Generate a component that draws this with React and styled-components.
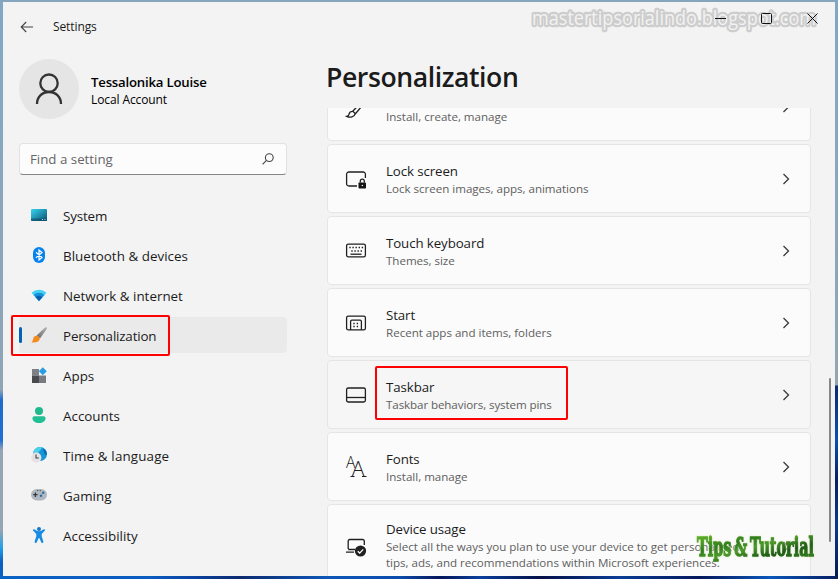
import styled, { createGlobalStyle } from "styled-components";

const GlobalStyle = createGlobalStyle`
  * {
    box-sizing: border-box;
  }
  body {
    margin: 0;
    overflow: hidden;
    font-family: "Open Sans", "Noto Sans", sans-serif;
    color: #1b1b1b;
  }
`;

const Desktop = styled.div`
  width: 838px;
  height: 579px;
  padding: 2px 3px 3px;
  background:
    linear-gradient(90deg, #0a62c4 0, #0a5cc0 150px, #0b3f9a 200px, #0c2a70 240px, #0d58b8 330px, #0b4cab 400px, #06155a 440px, #0a3f9c 480px, #050f48 540px, #0a3c96 620px, #06185c 700px, #0a58ba 770px, #061c62 838px) 0 576px / 838px 3px no-repeat,
    linear-gradient(180deg, #82a7c4 0, #8ea6b6 300px, #93a5b1 385px, #0a2a70 386px, #0c50b0 440px, #05205e 480px, #0b3a8c 525px, #05184e 579px) 835px 0 / 3px 579px no-repeat,
    linear-gradient(180deg, #82a7c4 0, #8fa5b6 390px, #1d6ccc 400px, #1f6fd4 440px, #95a5b4 450px, #95a5b4 530px, #22a0e8 548px, #0b5fc2 562px, #0a62c4 579px) 0 0 / 3px 579px no-repeat,
    #85a5bd;
`;

const Window = styled.div`
  position: relative;
  display: flex;
  width: 832px;
  height: 574px;
  background: #f3f3f3;
  overflow: hidden;
`;

const Sidebar = styled.aside`
  width: 284px;
  padding-left: 16px;
  flex-shrink: 0;
`;

const TitleBar = styled.div`
  display: flex;
  align-items: center;
  gap: 19px;
  height: 49px;
  font-size: 12px;
  letter-spacing: -0.1px;
  padding-left: 1px;
`;

const Profile = styled.div`
  display: flex;
  align-items: center;
  gap: 12px;
  margin-top: 8px;
`;

const Avatar = styled.div`
  display: flex;
  align-items: center;
  justify-content: center;
  width: 60px;
  height: 60px;
  border-radius: 50%;
  background: #e5e5e5;
`;

const UserName = styled.div`
  font-size: 13.2px;
  font-weight: 600;
  line-height: 18px;
  color: #000;
  letter-spacing: -0.2px;
  padding-top: 2px;
`;

const UserType = styled.div`
  font-size: 12px;
  line-height: 17px;
  color: #000;
  letter-spacing: -0.1px;
`;

const SearchBox = styled.div`
  display: flex;
  align-items: center;
  justify-content: space-between;
  width: 268px;
  height: 32px;
  margin-top: 24px;
  padding: 0 12px 0 10px;
  background: #fcfcfc;
  border: 1px solid #e2e2e2;
  border-bottom-color: #858585;
  border-radius: 4px;
  color: #666;
  font-size: 13.3px;
`;

const Nav = styled.nav`
  display: flex;
  flex-direction: column;
  gap: 4px;
  margin-top: 22px;
`;

const NavItem = styled.div`
  display: flex;
  align-items: center;
  width: 268px;
  height: 36px;
  padding-top: 2px;
  border-radius: 4px;
  background: ${(props) => (props.$active ? "#eaeaea" : "transparent")};
  font-size: 13.4px;
  letter-spacing: ${(props) => props.$spacing || 0}px;

  &::before {
    content: "";
    width: 3px;
    height: 16px;
    margin-top: -2px;
    border-radius: 2px;
    background: ${(props) => (props.$active ? "#0063b8" : "transparent")};
  }

  svg {
    margin: -2px 16px 0 9px;
  }
`;

const Main = styled.main`
  flex: 1;
  display: flex;
  flex-direction: column;
  padding-left: 40px;
`;

const Controls = styled.div`
  display: flex;
  justify-content: flex-end;
  align-items: center;
  gap: 35px;
  height: 32px;
  padding-right: 17px;
  z-index: 1;
`;

const Heading = styled.h1`
  margin: 22px 0 0 -1px;
  height: 52px;
  font-size: 26.6px;
  line-height: 42px;
  font-weight: 600;
  letter-spacing: -0.42px;
`;

const CardList = styled.div`
  display: flex;
  flex-direction: column;
  gap: 3px;
  height: 468px;
  overflow: hidden;
`;

const Card = styled.div`
  display: flex;
  align-items: center;
  flex-shrink: 0;
  width: 484px;
  height: ${(props) => (props.$tall ? 85 : 69)}px;
  padding: 0 20px 0 18px;
  border: 1px solid #e5e5e5;
  border-radius: 4px;
  background: ${(props) => (props.$hover ? "#f6f6f6" : "#fbfbfb")};

  &:first-child {
    margin-top: -36px;
  }
`;

const CardText = styled.div`
  flex: 1;
  padding: ${(props) => (props.$tall ? "0 0 2px" : "1px 0 0")};
  margin-left: 20px;
  white-space: pre;
`;

const CardTitle = styled.div`
  padding-bottom: 1px;
  font-size: 13.3px;
  line-height: 18px;
  letter-spacing: -0.1px;
`;

const CardDesc = styled.div`
  font-size: 11.6px;
  line-height: 16px;
  color: #606060;
  letter-spacing: ${(props) => props.$spacing || -0.02}px;
`;

const ScrollThumb = styled.div`
  position: absolute;
  top: 376px;
  right: 4px;
  width: 2px;
  height: 164px;
  border-radius: 1px;
  background: #868686;
`;

const Highlight = styled.div`
  position: absolute;
  top: ${(props) => props.$top}px;
  left: ${(props) => props.$left}px;
  width: ${(props) => props.$width}px;
  height: ${(props) => props.$height}px;
  border: 2px solid #ff0000;
  border-radius: 2px;
`;

const Watermark = styled.svg`
  position: absolute;
  top: 0;
  left: 522px;
`;

const Brand = styled.svg`
  position: absolute;
  top: 526px;
  left: 690px;
  filter: drop-shadow(0 0 1px #dbe5bd);
`;

const Icon = ({ size = 16, children }) => (
  <svg width={size} height={size} viewBox={`0 0 ${size} ${size}`} fill="none">
    {children}
  </svg>
);

const LineIcon = ({ children }) => (
  <svg width="20" height="20" viewBox="0 0 20 20" fill="none" stroke="#202020" strokeWidth="1.3" overflow="visible">
    {children}
  </svg>
);

const navItems = [
  {
    label: "System",
    spacing: -0.15,
    icon: (
      <Icon>
        <defs>
          <linearGradient id="sys" x1="0" y1="0" x2="1" y2="1">
            <stop stopColor="#36d5f0" />
            <stop offset="1" stopColor="#0b4f70" />
          </linearGradient>
        </defs>
        <rect y="2" width="16" height="12" rx="1" fill="url(#sys)" />
        <path d="M0 11.5h16V13a1 1 0 0 1-1 1H1a1 1 0 0 1-1-1z" fill="#0b4660" opacity=".6" />
        <path d="M11 12.5h1M13.5 12.5h1" stroke="#b5e8ff" />
      </Icon>
    ),
  },
  {
    label: "Bluetooth & devices",
    spacing: 0.03,
    icon: (
      <Icon>
        <rect x="2" width="12" height="16" rx="6" fill="#0883ee" />
        <path d="M5 5.3l6 5.2L8 13V3l3 2.5-6 5.2" stroke="#fff" strokeWidth="1.2" />
      </Icon>
    ),
  },
  {
    label: "Network & internet",
    icon: (
      <Icon>
        <path d="M.5 5.8a10.8 10.8 0 0 1 15 0L8 14z" fill="#45d0f3" />
        <path d="M2.5 8a7.8 7.8 0 0 1 11 0L8 14z" fill="#1591dc" />
        <path d="M4.6 10.2a4.8 4.8 0 0 1 6.8 0L8 14z" fill="#0b5eae" />
      </Icon>
    ),
  },
  {
    label: "Personalization",
    active: true,
    spacing: -0.18,
    icon: (
      <Icon>
        <defs>
          <linearGradient id="brush" x1="1" y1="0" x2="0" y2="1">
            <stop stopColor="#b5b5b5" />
            <stop offset="1" stopColor="#68696b" />
          </linearGradient>
        </defs>
        <path d="M15.6.4c.7.7.2 1.7-.3 2.4L9 11.5 5.6 8.4 13 1.4c.8-.8 1.9-1.6 2.6-1z" fill="url(#brush)" />
        <path d="M5.6 8.8c1.9.2 3.5 1.7 3 3.7-.7 2.5-4 3.6-8.2 2.8 1.8-1 1.3-2.4 2-4.2.6-1.5 1.7-2.4 3.2-2.3z" fill="#f58b1f" />
      </Icon>
    ),
  },
  {
    label: "Apps",
    icon: (
      <Icon>
        <path d="M1 2h7v6.5H1z" fill="#7d8185" />
        <path d="M1 8.5h7V16H1z" fill="#484b4e" />
        <path d="M8 8.5h7V16H8z" fill="#787c80" />
        <path d="M11.8.2l4 4-4 4-4-4z" fill="#279ee4" />
      </Icon>
    ),
  },
  {
    label: "Accounts",
    icon: (
      <Icon>
        <circle cx="8" cy="4" r="4" fill="#20b98e" />
        <path d="M3.5 9.2h9c1.2 0 2 .8 2 2 0 3-2.8 4.8-6.5 4.8s-6.5-1.8-6.5-4.8c0-1.2.8-2 2-2z" fill="#20bf94" />
      </Icon>
    ),
  },
  {
    label: "Time & language",
    spacing: 0.14,
    icon: (
      <Icon>
        <circle cx="9" cy="7" r="7" fill="#1596d4" />
        <path d="M3 3.5C5 .6 8-.2 10 .1c1 1 .5 2.5-.8 3.2C8 4 8 5.5 6.5 6L2.2 7z" fill="#4fd0ea" />
        <path d="M12 1.5c2.5 1 4 3.5 3.9 6-.8 1-2 .2-2.5-1z" fill="#0b65b8" />
        <circle cx="5.3" cy="10.6" r="5.1" fill="#e6e2e3" />
        <path d="M5 7.5V11h2.8" stroke="#404040" strokeWidth="1.1" />
      </Icon>
    ),
  },
  {
    label: "Gaming",
    icon: (
      <Icon>
        <rect y="2" width="16" height="11.5" rx="5.7" fill="#b0b7be" />
        <path d="M2.2 7.7h4.4M4.4 5.5v4.4" stroke="#353b40" strokeWidth="1.3" />
        <circle cx="12.2" cy="5.7" r="1.2" fill="#2670a8" />
        <circle cx="10" cy="8.8" r="1.2" fill="#2670a8" />
        <path d="M6 3.6h1.2M8.7 3.6h1.2" stroke="#444b50" />
      </Icon>
    ),
  },
  {
    label: "Accessibility",
    icon: (
      <Icon>
        <circle cx="8" cy="2.1" r="2" fill="#1277cc" />
        <path d="M2.2 2.5c.5-.6 1.2-.4 1.8.1C5.2 3.7 6.5 4.3 8 4.3s2.8-.6 4-1.7c.6-.5 1.3-.7 1.8-.1.5.7.1 1.2-.5 1.8L10.7 7v2.3l1.6 5c.2.8 0 1.4-.7 1.6-.6.2-1.2-.1-1.5-.9L8.3 11h-.6l-1.8 4c-.3.8-.9 1.1-1.5.9-.7-.2-.9-.8-.7-1.6l1.6-5V7L2.7 4.3c-.6-.6-1-1.1-.5-1.8z" fill="#168be4" />
      </Icon>
    ),
  },
];

const cards = [
  {
    title: "Themes",
    desc: "Install, create, manage",
    spacing: -0.02,
    icon: (
      <LineIcon>
        <path d="M6.5 14.5L16.5 4M9.2 17L18.5 6M7 14.3c-2.5-.2-3.7 1.2-4 3-.2 1.300-1 1.700-2.300 2 3.200 1.500 7.800.8 8.600-2.600z" />
      </LineIcon>
    ),
  },
  {
    title: "Lock screen",
    desc: "Lock screen images, apps, animations",
    spacing: -0.03,
    icon: (
      <LineIcon>
        <path d="M11 17H3a2.300 2.300 0 0 1-2.400-2.300V5.300A2.300 2.300 0 0 1 3 3h14a2.300 2.300 0 0 1 2.400 2.300V9" />
        <rect x="12.5" y="13.5" width="7.5" height="6" rx=".8" fill="#151515" stroke="none" />
        <path d="M14.300 13.500v-1.300a2 2 0 0 1 4 0v1.300" />
        <circle cx="16.300" cy="16.500" r=".7" fill="#fff" stroke="none" />
      </LineIcon>
    ),
  },
  {
    title: "Touch keyboard",
    desc: "Themes, size",
    spacing: -0.04,
    icon: (
      <LineIcon>
        <rect x=".6" y="3.100" width="18.800" height="12.800" rx="1.700" />
        <path d="M3.300 6.500h14M5.300 10h11" strokeDasharray="1.400 1.700" strokeWidth="1.400" />
        <path d="M4.500 13.200h11" />
      </LineIcon>
    ),
  },
  {
    title: "Start",
    desc: "Recent apps and items, folders",
    icon: (
      <LineIcon>
        <rect x=".6" y="3.100" width="18.800" height="13.800" rx="1.700" />
        <path d="M4.600 17V8.500a1.300 1.300 0 0 1 1.300-1.300h8.200a1.300 1.300 0 0 1 1.300 1.300V17" />
        <path d="M7.300 10.500h6M7.300 13.500h6" strokeDasharray="1.400 2" strokeWidth="1.400" />
      </LineIcon>
    ),
  },
  {
    title: "Taskbar",
    desc: "Taskbar behaviors, system pins",
    spacing: -0.1,
    hover: true,
    icon: (
      <LineIcon>
        <rect x=".6" y="3" width="18.800" height="14" rx="1.800" />
        <path d="M.6 12.500h18.800" />
      </LineIcon>
    ),
  },
  {
    title: "Fonts",
    desc: "Install, manage",
    icon: (
      <svg width="20" height="22" viewBox="0 0 20 22" fill="#202020" fontFamily="Open Sans, sans-serif" fontWeight="300" overflow="visible">
        <text x="0" y="12" fontSize="15.5">A</text>
        <text x="5.5" y="21" fontSize="22">A</text>
        <path d="M4.5 20.5h4M16 20.5h4.5" stroke="#202020" />
      </svg>
    ),
  },
  {
    title: "Device usage",
    desc: "Select all the ways you plan to use your device to get personalized\ntips, ads, and recommendations within Microsoft experiences.",
    spacing: -0.02,
    tall: true,
    icon: (
      <LineIcon>
        <path d="M2.200 12V4a1.500 1.500 0 0 1 1.500-1.500h13A1.500 1.500 0 0 1 18.300 4v4M2.200 12.500H9M0 15.200h8" />
        <circle cx="14.500" cy="14" r="5.600" fill="#202020" stroke="none" />
        <path d="M11.800 14.200l1.900 1.900 3.500-3.700" stroke="#fff" />
      </LineIcon>
    ),
  },
];

const Chevron = () => (
  <svg width="8" height="12" viewBox="0 0 8 12" fill="none" stroke="#3a3a3a" strokeWidth="1.3">
    <path d="M1.5 1l5 5-5 5" />
  </svg>
);

const App = () => {
  return (
    <>
      <GlobalStyle />
      <Desktop>
        <Window>
          <Sidebar>
            <TitleBar>
              <svg width="14" height="12" viewBox="0 0 14 12" fill="none" stroke="#444" strokeWidth="1.1">
                <path d="M13 6H1.5M6.2 1L1.2 6l5 5" />
              </svg>
              Settings
            </TitleBar>
            <Profile>
              <Avatar>
                <svg width="28" height="32" viewBox="0 0 28 32" fill="none" stroke="#333" strokeWidth="2.3">
                  <circle cx="14" cy="10.2" r="8.7" />
                  <path d="M2 31c0-7 5-12 12-12s12 5 12 12" />
                </svg>
              </Avatar>
              <div>
                <UserName>Tessalonika Louise</UserName>
                <UserType>Local Account</UserType>
              </div>
            </Profile>
            <SearchBox>
              Find a setting
              <svg width="12" height="12" viewBox="0 0 12 12" fill="none" stroke="#444" strokeWidth="1.1">
                <circle cx="7.3" cy="4.6" r="3.9" />
                <path d="M4.4 7.4L.6 11.3" />
              </svg>
            </SearchBox>
            <Nav>
              {navItems.map((item) => (
                <NavItem key={item.label} $active={item.active} $spacing={item.spacing}>
                  {item.icon}
                  {item.label}
                </NavItem>
              ))}
            </Nav>
          </Sidebar>
          <Main>
            <Controls>
              <svg width="11" height="11" viewBox="0 0 11 11" stroke="#111">
                <path d="M0 5.5h11" />
              </svg>
              <svg width="11" height="11" viewBox="0 0 11 11" fill="none" stroke="#111">
                <rect x=".5" y=".5" width="10" height="10" rx="1" />
              </svg>
              <svg width="11" height="11" viewBox="0 0 11 11" stroke="#111">
                <path d="M.5.5l10 10M10.5.5l-10 10" />
              </svg>
            </Controls>
            <Heading>Personalization</Heading>
            <CardList>
              {cards.map((card) => (
                <Card key={card.title} $hover={card.hover} $tall={card.tall}>
                  {card.icon}
                  <CardText $tall={card.tall}>
                    <CardTitle>{card.title}</CardTitle>
                    <CardDesc $spacing={card.spacing}>{card.desc}</CardDesc>
                  </CardText>
                  <Chevron />
                </Card>
              ))}
            </CardList>
          </Main>
          <ScrollThumb />
          <Highlight $top={313} $left={8} $width={159} $height={41} />
          <Highlight $top={364} $left={372} $width={193} $height={54} />
          <Watermark width="310" height="34">
            <text x="7" y="22.5" fontSize="20" fontFamily="Open Sans, sans-serif" textLength="284" lengthAdjust="spacingAndGlyphs" fill="#f2f2f2" stroke="#cdcdcd" strokeWidth="4.5" strokeLinejoin="round" paintOrder="stroke">
              mastertipsorialindo.blogspot.com
            </text>
          </Watermark>
          <Brand width="130" height="40">
            <defs>
              <linearGradient id="leaf" x1="0" y1="0" x2="1" y2="1">
                <stop stopColor="#6fc22a" />
                <stop offset=".35" stopColor="#2f7d1d" />
                <stop offset=".5" stopColor="#4c9a2a" />
                <stop offset=".7" stopColor="#1f5c18" />
                <stop offset="1" stopColor="#3f8a26" />
              </linearGradient>
            </defs>
            <text x="4" y="27.5" fontSize="26" fontWeight="bold" fontFamily="DejaVu Serif, serif" textLength="117" lengthAdjust="spacingAndGlyphs" wordSpacing="-4" fill="url(#leaf)" stroke="url(#leaf)" strokeWidth="1.3">
              Tips &amp; Tutorial
            </text>
          </Brand>
        </Window>
      </Desktop>
    </>
  );
};

export default App;
